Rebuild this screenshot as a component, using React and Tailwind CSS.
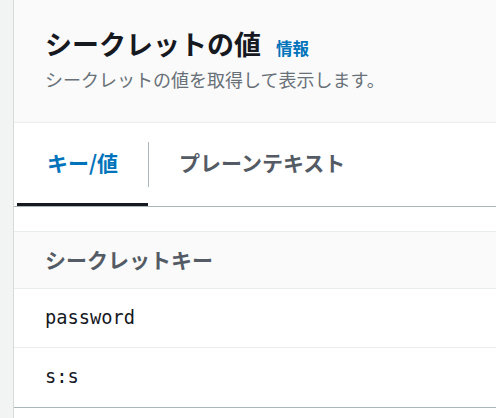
import React from 'react';

const jp = { fontFamily: '"Noto Sans CJK JP", "Noto Sans", sans-serif' };

function Header() {
  return (
    <div className="h-[123px] bg-[#fafafa] border-b border-[#eaeded] pl-[31px] pt-[27px]">
      <div className="flex items-baseline gap-[15px]">
        <h2 className="text-[27px] leading-[34px] font-bold text-[#16191f]">シークレットの値</h2>
        <a className="text-[16.5px] font-bold text-[#0073bb]">情報</a>
      </div>
      <p className="mt-[6px] text-[18px] leading-[24px] text-[#687078]">シークレットの値を取得して表示します。</p>
    </div>
  );
}

function Tabs() {
  return (
    <div className="flex h-[84px] border-b border-[#aab7b8]">
      <div className="ml-[3px] w-[131px] flex flex-col">
        <div className="flex-1 flex items-center justify-center text-[21px] font-bold text-[#0073bb]">キー/値</div>
        <div className="h-[3px] bg-[#16191f]" />
      </div>
      <div className="flex items-center pb-[3px]">
        <div className="w-px h-[45px] bg-[#aab7b8] translate-y-[1px]" />
      </div>
      <div className="flex items-center pb-[3px] pl-[30px] text-[21px] font-bold text-[#545b64]">プレーンテキスト</div>
    </div>
  );
}

function KeyTable() {
  const rows = ['password', 's:s'];
  return (
    <div className="mt-[24px] border-t border-[#eaeded] border-b border-b-[#aab7b8]">
      <div className="h-[57px] bg-[#fafafa] border-b border-[#eaeded] flex items-center pl-[31px] text-[21px] font-bold text-[#545b64]">
        シークレットキー
      </div>
      {rows.map((r, i) => (
        <div
          key={r}
          className={i === 0 ? 'h-[59px] border-b border-[#eaeded] flex items-center pl-[31px]' : 'h-[59px] flex items-center pl-[31px]'}
        >
          <span className="text-[18.7px] text-[#16191f]" style={{ fontFamily: '"DejaVu Sans Mono", monospace' }}>{r}</span>
        </div>
      ))}
    </div>
  );
}

export default function App() {
  return (
    <div className="flex min-h-[418px] bg-white" style={jp}>
      <div className="w-[14px] shrink-0 bg-[#f2f3f3] border-r border-[#d5dbdb]" />
      <div className="flex-1 min-w-0">
        <Header />
        <Tabs />
        <KeyTable />
      </div>
    </div>
  );
}
